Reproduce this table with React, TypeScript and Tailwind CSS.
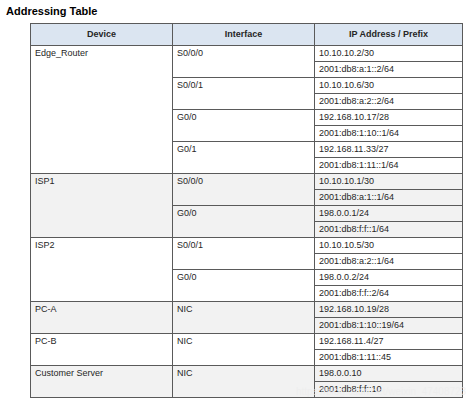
type Iface = { name: string; ips: [string, string] };
type Device = { name: string; shaded: boolean; ifaces: Iface[] };

const DEVICES: Device[] = [
  {
    name: "Edge_Router",
    shaded: false,
    ifaces: [
      { name: "S0/0/0", ips: ["10.10.10.2/30", "2001:db8:a:1::2/64"] },
      { name: "S0/0/1", ips: ["10.10.10.6/30", "2001:db8:a:2::2/64"] },
      { name: "G0/0", ips: ["192.168.10.17/28", "2001:db8:1:10::1/64"] },
      { name: "G0/1", ips: ["192.168.11.33/27", "2001:db8:1:11::1/64"] },
    ],
  },
  {
    name: "ISP1",
    shaded: true,
    ifaces: [
      { name: "S0/0/0", ips: ["10.10.10.1/30", "2001:db8:a:1::1/64"] },
      { name: "G0/0", ips: ["198.0.0.1/24", "2001:db8:f:f::1/64"] },
    ],
  },
  {
    name: "ISP2",
    shaded: false,
    ifaces: [
      { name: "S0/0/1", ips: ["10.10.10.5/30", "2001:db8:a:2::1/64"] },
      { name: "G0/0", ips: ["198.0.0.2/24", "2001:db8:f:f::2/64"] },
    ],
  },
  {
    name: "PC-A",
    shaded: true,
    ifaces: [{ name: "NIC", ips: ["192.168.10.19/28", "2001:db8:1:10::19/64"] }],
  },
  {
    name: "PC-B",
    shaded: false,
    ifaces: [{ name: "NIC", ips: ["192.168.11.4/27", "2001:db8:1:11::45"] }],
  },
  {
    name: "Customer Server",
    shaded: true,
    ifaces: [{ name: "NIC", ips: ["198.0.0.10", "2001:db8:f:f::10"] }],
  },
];

export default function App() {
  return (
    <div
      className="relative h-[405px] w-[474px] overflow-hidden bg-white text-[#262626]"
      style={{ fontFamily: '"Liberation Sans", Arial, sans-serif' }}
    >
      <div className="pl-[6px] pt-[5px] text-[11px] font-bold leading-[13px] text-black">
        Addressing Table
      </div>

      <div className="ml-[30px] mt-[5px] w-[433px] border-l border-t border-[#5a5a5a]">
        {/* header */}
        <div className="flex h-[22px] bg-[#dbe5f1] text-[9px] font-bold leading-[21px]">
          <div className="w-[142px] border-b border-r border-[#5a5a5a] text-center">Device</div>
          <div className="w-[142px] border-b border-r border-[#5a5a5a] text-center">Interface</div>
          <div className="w-[148px] border-b border-r border-[#5a5a5a] text-center">IP Address / Prefix</div>
        </div>

        {DEVICES.map((d) => (
          <div key={d.name} className={`flex text-[9px] ${d.shaded ? "bg-[#f2f2f2]" : "bg-white"}`}>
            <div className="w-[142px] border-b border-r border-[#5a5a5a] pl-[4px] pt-[1px] leading-[12px]">
              {d.name}
            </div>
            <div className="flex flex-col">
              {d.ifaces.map((f) => (
                <div key={f.name + f.ips[0]} className="flex">
                  <div className="w-[142px] border-b border-r border-[#5a5a5a] pl-[4px] pt-[1px] leading-[12px]">
                    {f.name}
                  </div>
                  <div className="flex w-[148px] flex-col">
                    {f.ips.map((ip) => (
                      <div
                        key={ip}
                        className="h-[16px] border-b border-r border-[#5a5a5a] pl-[4px] leading-[15px]"
                      >
                        {ip}
                      </div>
                    ))}
                  </div>
                </div>
              ))}
            </div>
          </div>
        ))}
      </div>

      {/* faint watermark over the last rows */}
      <div className="pointer-events-none absolute left-[296px] top-[386px] text-[10px] leading-[12px] text-[#ececec]/70">
        https://blog.csdn.net/weixin_47408723
      </div>
    </div>
  );
}
